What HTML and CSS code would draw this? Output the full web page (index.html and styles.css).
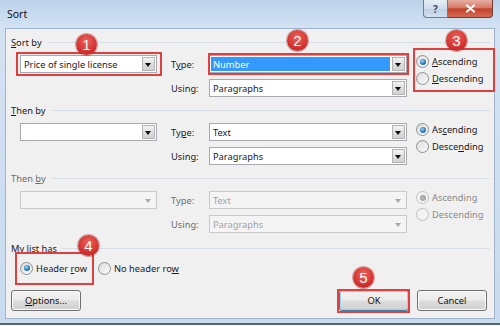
FILE: index.html
```html
<!DOCTYPE html>
<html lang="en">
<head>
    <meta charset="UTF-8">
    <meta name="viewport" content="width=device-width, initial-scale=1.0">
    <title>Sort</title>
    <link rel="stylesheet" href="styles.css">
</head>
<body>
    <div class="window">
        <div class="titlebar">
            <span class="title">Sort</span>
            <div class="caption-btns">
                <span class="cap-btn help">?</span>
                <span class="cap-btn close">
                    <svg width="11" height="9" viewBox="0 0 11 9"><path d="M2 1.5 L9 7.5 M9 1.5 L2 7.5" stroke="#fff" stroke-width="2.2" stroke-linecap="round"/></svg>
                </span>
            </div>
        </div>

        <div class="client">
            <section class="group">
                <div class="group-head"><span><u>S</u>ort by</span></div>
                <div class="group-body">
                    <div class="combo key mark mark-key">
                        <span class="combo-text">Price of single license</span>
                        <span class="combo-btn"></span>
                    </div>
                    <span class="field-label row-1">T<u>y</u>pe:</span>
                    <div class="combo wide row-1 mark mark-type">
                        <span class="combo-text selected">Number</span>
                        <span class="combo-btn"></span>
                    </div>
                    <span class="field-label row-2">Using:</span>
                    <div class="combo wide row-2">
                        <span class="combo-text">Paragraphs</span>
                        <span class="combo-btn"></span>
                    </div>
                    <div class="radios">
                        <div class="mark mark-order">
                            <label class="radio checked"><span class="dot"></span><span><u>A</u>scending</span></label>
                            <label class="radio"><span class="dot"></span><span><u>D</u>escending</span></label>
                        </div>
                    </div>
                </div>
            </section>

            <section class="group">
                <div class="group-head"><span><u>T</u>hen by</span></div>
                <div class="group-body">
                    <div class="combo key">
                        <span class="combo-text"></span>
                        <span class="combo-btn"></span>
                    </div>
                    <span class="field-label row-1">Ty<u>p</u>e:</span>
                    <div class="combo wide row-1">
                        <span class="combo-text">Text</span>
                        <span class="combo-btn"></span>
                    </div>
                    <span class="field-label row-2">Using:</span>
                    <div class="combo wide row-2">
                        <span class="combo-text">Paragraphs</span>
                        <span class="combo-btn"></span>
                    </div>
                    <div class="radios">
                        <label class="radio checked"><span class="dot"></span><span>As<u>c</u>ending</span></label>
                        <label class="radio"><span class="dot"></span><span>Desce<u>n</u>ding</span></label>
                    </div>
                </div>
            </section>

            <section class="group disabled">
                <div class="group-head"><span>Then <u>b</u>y</span></div>
                <div class="group-body">
                    <div class="combo key">
                        <span class="combo-text"></span>
                        <span class="combo-btn"></span>
                    </div>
                    <span class="field-label row-1">Type:</span>
                    <div class="combo wide row-1">
                        <span class="combo-text">Text</span>
                        <span class="combo-btn"></span>
                    </div>
                    <span class="field-label row-2">Using:</span>
                    <div class="combo wide row-2">
                        <span class="combo-text">Paragraphs</span>
                        <span class="combo-btn"></span>
                    </div>
                    <div class="radios">
                        <label class="radio checked"><span class="dot"></span><span>Ascending</span></label>
                        <label class="radio"><span class="dot"></span><span>Descending</span></label>
                    </div>
                </div>
            </section>

            <section class="group list-has">
                <div class="group-head"><span>My list has</span></div>
                <div class="header-options">
                    <label class="radio checked mark mark-header"><span class="dot"></span><span>Header <u>r</u>ow</span></label>
                    <label class="radio"><span class="dot"></span><span>No header ro<u>w</u></span></label>
                </div>
            </section>

            <div class="buttons">
                <button class="btn"><span><u>O</u>ptions...</span></button>
                <div class="spacer"></div>
                <button class="btn default mark mark-ok">OK</button>
                <button class="btn">Cancel</button>
            </div>
        </div>

        <span class="badge b1">1</span>
        <span class="badge b2">2</span>
        <span class="badge b3">3</span>
        <span class="badge b4">4</span>
        <span class="badge b5">5</span>
    </div>
</body>
</html>
```

FILE: styles.css
```css
* {
    margin: 0;
    padding: 0;
    box-sizing: border-box;
}

body {
    width: 500px;
    height: 326px;
    overflow: hidden;
    font-family: "Noto Sans", sans-serif;
    font-size: 9.3px;
    color: #1a1a1a;
    background: #ffffff;
}

u {
    text-decoration-thickness: 1px;
    text-underline-offset: 1px;
}

.window {
    position: relative;
    height: 325px;
    display: flex;
    flex-direction: column;
    padding: 0 5px 4px 5px;
    background: linear-gradient(#bcd2ea, #d3e2f3 28px, #c9dbee);
    border-bottom: 2px solid #55657a;
}

.titlebar {
    height: 28px;
    display: flex;
    align-items: center;
    padding-left: 2px;
}

.title {
    font-size: 10.5px;
    color: #111;
    flex: 1;
}

.caption-btns {
    align-self: flex-start;
    display: flex;
    margin-right: 2px;
}

.cap-btn {
    height: 18px;
    display: flex;
    align-items: center;
    justify-content: center;
}

.help {
    width: 25px;
    border: 1px solid #6d7e94;
    border-top: none;
    border-radius: 0 0 0 4px;
    background: linear-gradient(#e6eef7, #d0ddec 50%, #bccfe5 51%, #d2e0f0);
    color: #3b4b5e;
    font-size: 10px;
    font-weight: 700;
}

.close {
    width: 45px;
    border: 1px solid #6e3d37;
    border-top: none;
    border-left: none;
    border-radius: 0 0 4px 0;
    background: linear-gradient(#e7b0a5, #d77966 45%, #c2432f 52%, #d36a52);
}

.client {
    flex: 1;
    background: #f0f0f0;
    border: 1px solid #9fb4cc;
    padding: 7px 4px 0 5px;
    display: flex;
    flex-direction: column;
}

.group {
    margin-bottom: 7px;
}

.group-head {
    display: flex;
    align-items: center;
    height: 12px;
    margin-bottom: 7px;
}

.group-head::after {
    content: "";
    flex: 1;
    margin-left: 5px;
    border-top: 1px solid #d5dfe5;
}

.group-body {
    display: grid;
    grid-template-columns: 151px 38px 198px 1fr;
    grid-template-rows: 18px 18px;
    row-gap: 6px;
    margin-left: 9px;
}

.field-label {
    grid-column: 2;
    align-self: center;
}

.row-1 { grid-row: 1; }
.row-2 { grid-row: 2; }

.combo {
    display: flex;
    align-items: stretch;
    background: #ffffff;
    border: 1px solid #a7abb1;
    padding: 1px;
}

.combo.key {
    grid-column: 1;
    grid-row: 1;
    width: 137px;
}

.combo.wide {
    grid-column: 3;
}

.combo-text {
    flex: 1;
    display: flex;
    align-items: center;
    padding-left: 2px;
    margin-right: 2px;
    white-space: nowrap;
}

.combo-text.selected {
    background: #3399ff;
    color: #ffffff;
}

.combo-btn {
    width: 13px;
    position: relative;
    border: 1px solid #b3b3b3;
    background: linear-gradient(#f4f4f4, #dedede 50%, #d2d2d2);
}

.combo-btn::after {
    content: "";
    position: absolute;
    left: 2px;
    top: 5px;
    border-left: 3.5px solid transparent;
    border-right: 3.5px solid transparent;
    border-top: 4px solid #111;
}

.radios {
    grid-column: 4;
    grid-row: 1 / 3;
    padding-left: 9px;
    margin-top: -2px;
}

.radio {
    display: flex;
    align-items: center;
    gap: 3px;
    height: 17px;
}

.dot {
    position: relative;
    width: 13px;
    height: 13px;
    border-radius: 50%;
    border: 1px solid #8e9092;
    background: linear-gradient(135deg, #dcdcdc, #fbfbfb);
}

.checked .dot::after {
    content: "";
    position: absolute;
    inset: 2.5px;
    border-radius: 50%;
    background: radial-gradient(circle at 40% 35%, #9bd8f7, #2a79b8 55%, #124f82);
}

.disabled {
    color: #6d6d6d;
}

.disabled .combo {
    background: #f4f4f4;
    border-color: #c9c9c9;
}

.disabled .combo-text {
    color: #a3a3a3;
}

.disabled .combo-btn {
    border-color: transparent;
    background: transparent;
}

.disabled .combo-btn::after {
    border-top-color: #a8a8a8;
}

.disabled .dot {
    border-color: #c2c2c2;
    background: #f2f2f2;
}

.disabled .checked .dot::after {
    background: radial-gradient(circle, #b8b8b8, #9a9a9a);
}

.disabled .radio {
    color: #8a8a8a;
}

.list-has {
    margin-top: 2px;
    margin-bottom: 0;
}

.header-options {
    display: flex;
    align-items: center;
    gap: 11px;
    margin-left: 9px;
    height: 14px;
}

.buttons {
    display: flex;
    gap: 8px;
    margin-top: 15px;
    padding-right: 3px;
}

.spacer {
    flex: 1;
}

.btn {
    width: 70px;
    height: 21px;
    border: 1px solid #707070;
    border-radius: 3px;
    background: linear-gradient(#f2f2f2, #ebebeb 48%, #dddddd 52%, #cfcfcf);
    box-shadow: inset 0 0 0 1px #fbfbfb;
    font-family: inherit;
    font-size: inherit;
    color: #111;
}

.btn.default {
    border-color: #3c7fb1;
    box-shadow: inset 0 0 0 1px #8fd7f4;
}

.mark {
    position: relative;
}

.mark::after {
    content: "";
    position: absolute;
    border: 2px solid #e2403f;
    pointer-events: none;
}

.mark-key::after { inset: -4px -6px -4px -5px; }
.mark-type::after { inset: -3px -3px -3px -2px; }
.mark-order::after { inset: -5px -5px -5px -3px; }
.mark-header::after { inset: -8px -7px -8px -5px; }
.mark-ok::after { inset: -2px -2px -3px -3px; }

.radio.mark {
    position: relative;
}

.badge {
    position: absolute;
    width: 21px;
    height: 21px;
    border-radius: 50%;
    background: radial-gradient(circle at 50% 35%, #ee625c, #d0302d 65%, #b32322);
    box-shadow: 0 0 0 1px rgba(140, 30, 30, 0.35);
    color: #ffffff;
    font-family: "Liberation Sans", sans-serif;
    font-size: 15px;
    display: flex;
    align-items: center;
    justify-content: center;
}

.b1 { left: 76px; top: 34px; }
.b2 { left: 287px; top: 30px; }
.b3 { left: 446px; top: 30px; }
.b4 { left: 78px; top: 235px; }
.b5 { left: 353px; top: 267px; }
```
